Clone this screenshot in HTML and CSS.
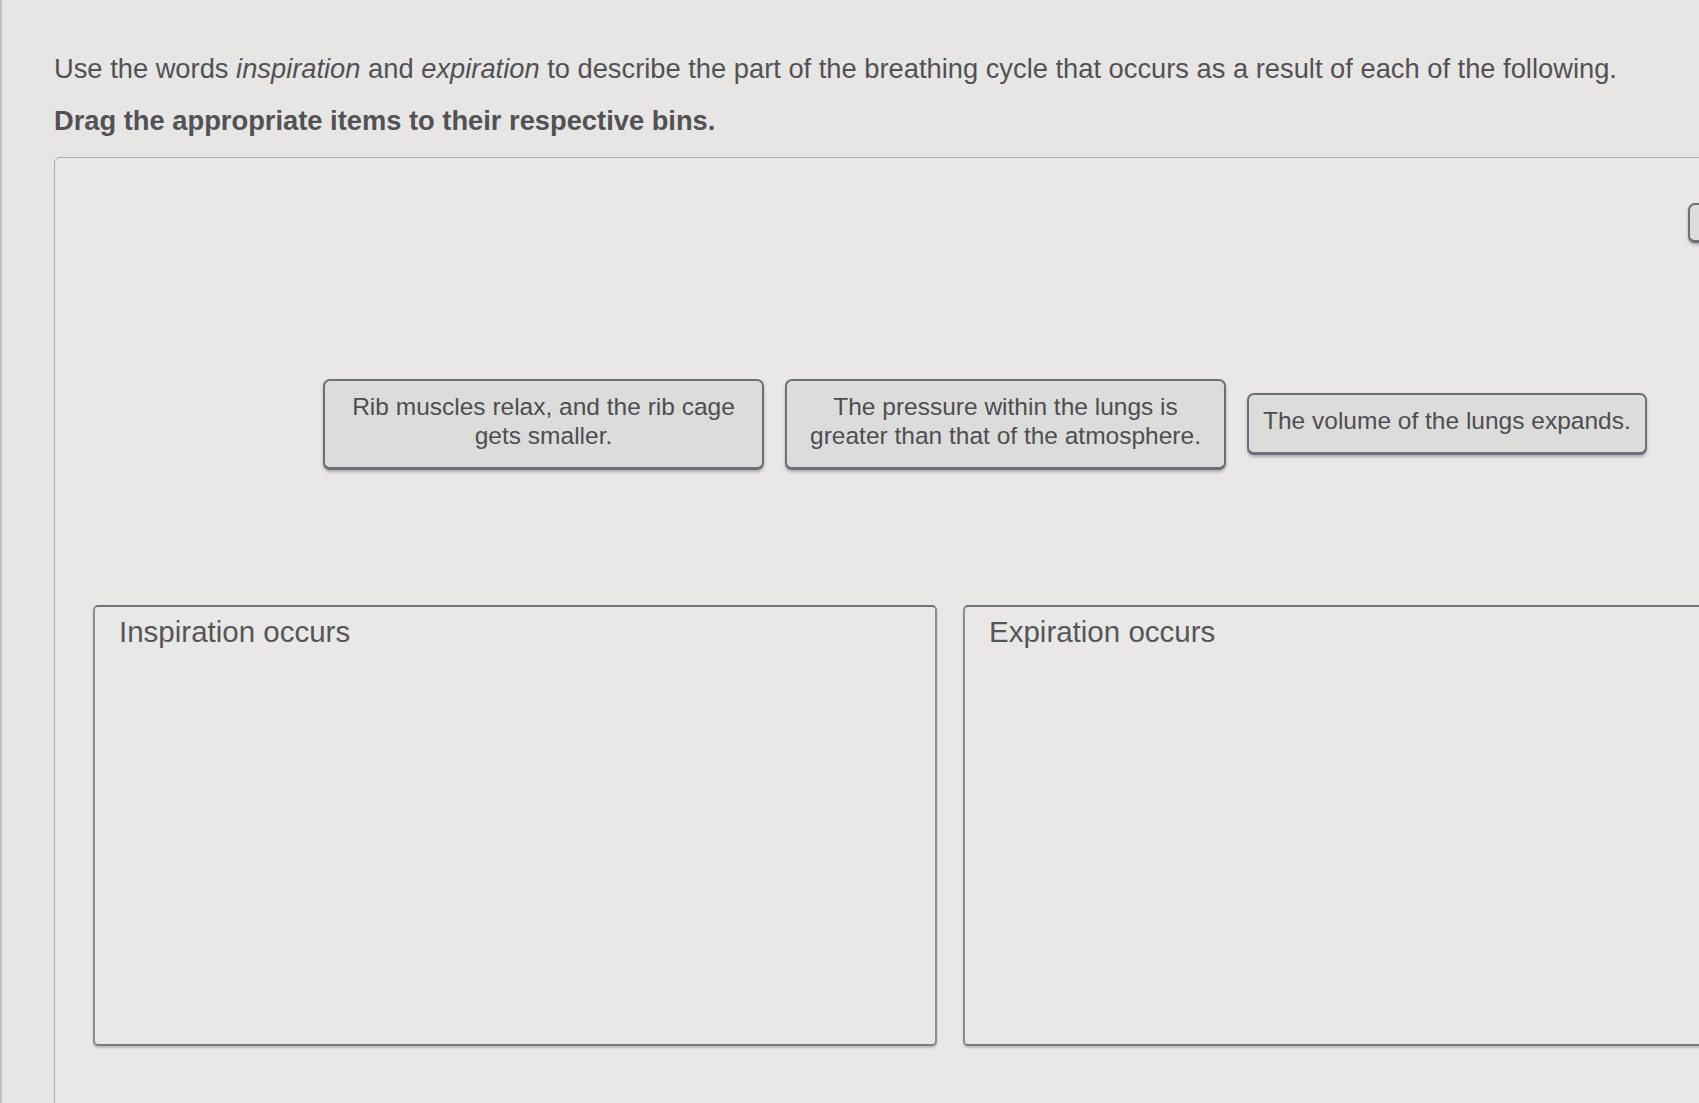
FILE: index.html
```html
<!DOCTYPE html>
<html lang="en">
<head>
<meta charset="utf-8">
<title>Breathing cycle</title>
<link rel="stylesheet" href="styles.css">
</head>
<body>
<div class="page">
  <p class="prompt">Use the words <em>inspiration</em> and <em>expiration</em> to describe the part of the breathing cycle that occurs as a result of each of the following.</p>
  <p class="instruction">Drag the appropriate items to their respective bins.</p>
  <div class="board">
    <div class="pool">
      <div class="card">Rib muscles relax, and the rib cage gets smaller.</div>
      <div class="card">The pressure within the lungs is greater than that of the atmosphere.</div>
      <div class="card">The volume of the lungs expands.</div>
    </div>
    <div class="card card-off"></div>
    <div class="bins">
      <div class="bin"><div class="bin-title">Inspiration occurs</div></div>
      <div class="bin"><div class="bin-title">Expiration occurs</div></div>
    </div>
  </div>
</div>
</body>
</html>
```
FILE: styles.css
```css
html, body {
  margin: 0;
  padding: 0;
}
body {
  background: #e7e6e4;
  width: 1699px;
  height: 1103px;
  overflow: hidden;
  font-family: "Liberation Sans", Arial, sans-serif;
  color: #525256;
  border-left: 2px solid #c2c1bf;
  box-sizing: border-box;
}
.page {
  padding: 43px 0 0 52px;
}
.prompt,
.instruction {
  margin: 0;
  font-size: 27.3px;
  line-height: 52px;
  white-space: nowrap;
}
.prompt em {
  font-style: italic;
}
.instruction {
  font-weight: bold;
}
.board {
  position: relative;
  margin-top: 10px;
  width: 1800px;
  height: 1100px;
  border: 1px solid #adadab;
  border-radius: 6px;
  background: #e9e8e6;
}
.pool {
  display: flex;
  align-items: center;
  gap: 21px;
  padding: 218px 0 0 268px;
  height: 96px;
}
.card {
  box-sizing: border-box;
  max-width: 441px;
  padding: 11px 14px 17px;
  font-size: 24.5px;
  line-height: 29px;
  text-align: center;
  color: #4e4e52;
  background: #dcdcdb;
  border: 2px solid #6e6e7a;
  border-bottom-width: 3px;
  border-radius: 7px;
  box-shadow: 0 2px 3px rgba(60, 60, 70, 0.35);
}
.card-off {
  position: absolute;
  left: 1633px;
  top: 45px;
  width: 120px;
  height: 40px;
  padding: 0;
}
.bins {
  display: grid;
  grid-template-columns: 844px 844px;
  gap: 26px;
  padding: 133px 0 0 38px;
}
.bin {
  box-sizing: border-box;
  height: 441px;
  border: 2px solid #8c8c92;
  border-top-color: #737379;
  border-bottom-color: #7a7a80;
  border-radius: 5px;
  background: #e9e8e6;
  box-shadow: 0 2px 2px rgba(60, 60, 70, 0.25);
  padding: 8px 24px;
}
.bin-title {
  font-size: 29.5px;
  line-height: 34px;
  color: #56565a;
}
```
